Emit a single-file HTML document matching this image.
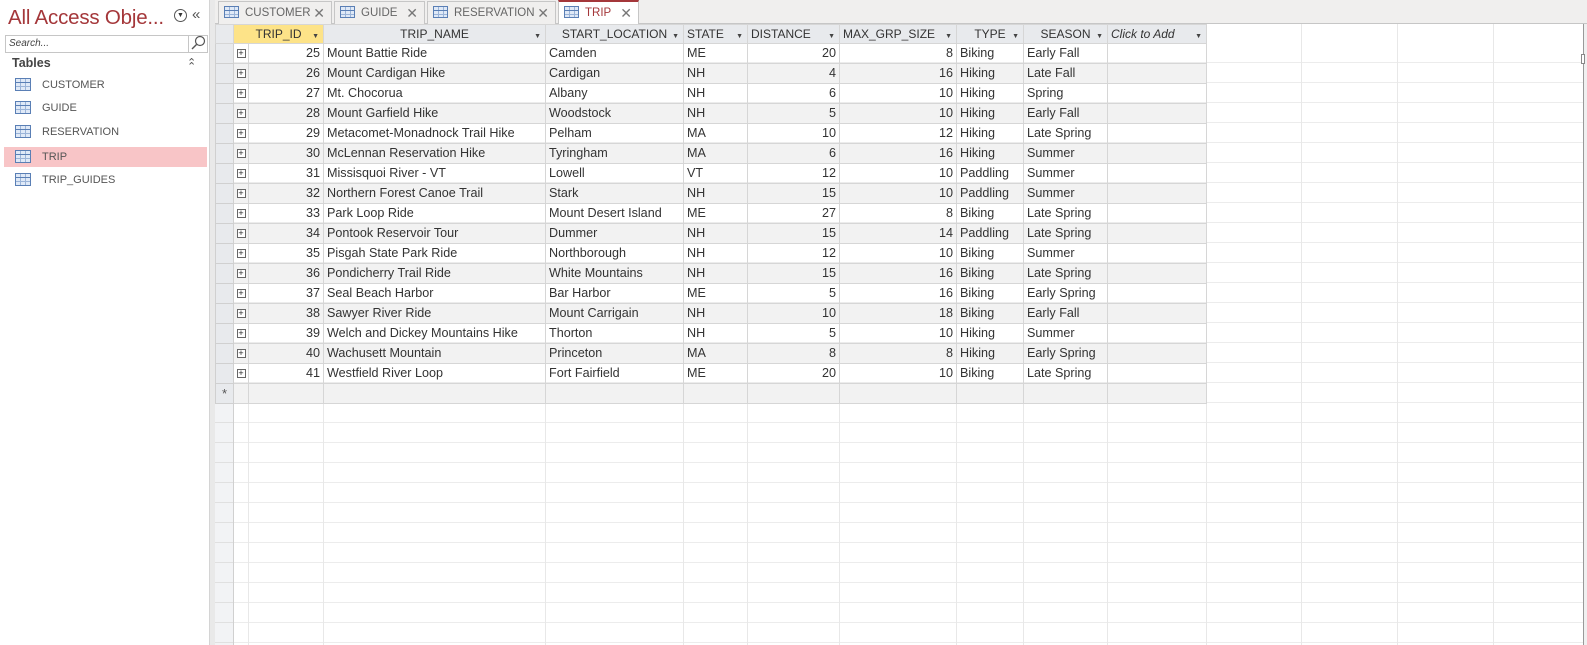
<!DOCTYPE html>
<html><head><meta charset="utf-8"><style>
*{margin:0;padding:0;box-sizing:border-box}
body{width:1587px;height:645px;overflow:hidden;background:#fff;font-family:"Liberation Sans",Arial,sans-serif;position:relative;color:#333}
#side{position:absolute;left:0;top:0;width:210px;height:645px;background:#fff;border-right:1px solid #d4d4d4}
#sbar{position:absolute;left:210px;top:0;width:5px;height:645px;background:#e9e9e9}
.title{position:absolute;left:8px;top:6px;font-size:20.5px;color:#a4373a;white-space:nowrap;letter-spacing:-0.2px}
.search{position:absolute;left:5px;top:35px;width:203px;height:18px;border:1px solid #c6c6c6;font-size:10px;font-style:italic;color:#444;padding:2px 3px}
.search .mag{position:absolute;right:0;top:-1px;width:19px;height:18px;border-left:1px solid #c6c6c6}
.tables{position:absolute;left:12px;top:56px;font-size:12.5px;font-weight:bold;color:#444}
.item{position:absolute;left:4px;width:203px;height:20px;font-size:11px;color:#555;padding:4px 0 0 38px}
.item.sel{background:#f8c5c7}
.ico{position:absolute;left:11px;top:3px;width:16px;height:13px;border:1px solid #5a7fb5;background:
linear-gradient(#5a7fb5,#5a7fb5) 0 3px/100% 1px no-repeat,
linear-gradient(#9bb4d8,#9bb4d8) 0 7px/100% 1px no-repeat,
linear-gradient(90deg,#9bb4d8,#9bb4d8) 4px 0/1px 100% no-repeat,
linear-gradient(90deg,#9bb4d8,#9bb4d8) 9px 0/1px 100% no-repeat,#dfe9f7}
#tabs{position:absolute;left:215px;top:0;width:1372px;height:24px;background:#f0efee;border-bottom:1px solid #c6c6c6}
.tab{position:absolute;top:1px;height:23px;border:1px solid #c6c6c6;border-bottom:none;background:#f0efee;font-size:11.5px;color:#666;padding:5px 0 0 26px}
.tab .ico{left:5px;top:4px;width:15px;height:12px}
.tab .x{position:absolute;right:6px;top:3px;font-size:14px;color:#777}
.tab.act{background:#fff;border-top:2px solid #a4373a;height:24px;top:0;color:#a4373a}
#bg{position:absolute;left:215px;top:43px;width:1368px;height:602px;background:
repeating-linear-gradient(to bottom,transparent 0,transparent 19px,#ececec 19px,#ececec 20px)}
#bg::before{content:"";position:absolute;left:0;top:0;width:18px;height:100%;background:repeating-linear-gradient(to bottom,#f2f3f5 0,#f2f3f5 19px,#e0e0e0 19px,#e0e0e0 20px);border-right:1px solid #d0d0d0}
.vl{position:absolute;top:24px;width:1px;height:621px;background:#e8e8e8}
#scr{position:absolute;left:1583px;top:24px;width:4px;height:621px;border-left:1px solid #999;background:#f0f0f0}
table{position:absolute;left:215px;top:24px;border-collapse:collapse;table-layout:fixed;font-size:12.6px}
td,th{border:1px solid #d6d6d6;white-space:nowrap;overflow:hidden;padding:0 3px;line-height:17px}
tr{height:20px}
tr.h{height:19px}
th{background:#e8eaed;font-weight:normal;color:#333;font-size:12px;text-align:center;position:relative}
th .dd{position:absolute;right:4px;top:3px;font-size:7px;color:#444}
th.y{background:#fde388}
tr.a td{background:#f2f2f2}
td.r{text-align:right}
td.s{background:#e8eaed!important;border-color:#d0d0d0}
td.e{padding:0;text-align:center}
.pl{display:inline-block;width:9px;height:9px;border:1px solid #666;font-size:9px;line-height:7px;text-align:center;color:#222;vertical-align:middle;background:#fff}
</style></head><body>
<div id="side">
<div class="title">All Access Obje...</div>
<div style="position:absolute;left:174px;top:9px;width:13px;height:13px;border:1px solid #555;border-radius:50%;font-size:7px;text-align:center;line-height:11px;color:#333">▼</div>
<div style="position:absolute;left:192px;top:6px;font-size:15px;color:#555">«</div>
<div class="search">Search...<div class="mag"><svg width="18" height="16"><circle cx="11" cy="6" r="4.5" fill="none" stroke="#555" stroke-width="1.2"/><line x1="7.5" y1="9.5" x2="3" y2="14" stroke="#555" stroke-width="1.4"/></svg></div></div>
<div class="tables">Tables</div>
<div style="position:absolute;left:187px;top:56px;font-size:11px;color:#555">⌃</div>
<div style="position:absolute;left:187px;top:60px;font-size:11px;color:#555">⌃</div>
<div class="item" style="top:75px"><span class="ico"></span>CUSTOMER</div>
<div class="item" style="top:98px"><span class="ico"></span>GUIDE</div>
<div class="item" style="top:122px"><span class="ico"></span>RESERVATION</div>
<div class="item sel" style="top:147px"><span class="ico"></span>TRIP</div>
<div class="item" style="top:170px"><span class="ico"></span>TRIP_GUIDES</div>
</div>
<div id="sbar"></div>
<div id="tabs">
<div class="tab" style="left:3px;width:114px"><span class="ico"></span>CUSTOMER<span class="x">✕</span></div>
<div class="tab" style="left:119px;width:91px"><span class="ico"></span>GUIDE<span class="x">✕</span></div>
<div class="tab" style="left:212px;width:129px"><span class="ico"></span>RESERVATION<span class="x">✕</span></div>
<div class="tab act" style="left:343px;width:81px"><span class="ico"></span>TRIP<span class="x">✕</span></div>
</div>
<div id="bg"></div>
<div class="vl" style="left:248px"></div><div class="vl" style="left:323px"></div><div class="vl" style="left:545px"></div><div class="vl" style="left:683px"></div><div class="vl" style="left:747px"></div><div class="vl" style="left:839px"></div><div class="vl" style="left:956px"></div><div class="vl" style="left:1023px"></div><div class="vl" style="left:1107px"></div><div class="vl" style="left:1206px"></div><div class="vl" style="left:1301px"></div><div class="vl" style="left:1397px"></div><div class="vl" style="left:1493px"></div>
<div id="scr"><div style="position:absolute;left:-3px;top:30px;width:4px;height:10px;border:1px solid #888;background:#fff"></div></div>
<table>
<colgroup><col style="width:18px"><col style="width:15px"><col style="width:75px"><col style="width:222px"><col style="width:138px"><col style="width:64px"><col style="width:92px"><col style="width:117px"><col style="width:67px"><col style="width:84px"><col style="width:99px"></colgroup>
<tr class="h"><th style="background:#e8eaed"></th><th class="y" colspan="2">TRIP_ID<span class="dd">▼</span></th><th>TRIP_NAME<span class="dd">▼</span></th><th>START_LOCATION<span class="dd">▼</span></th><th style="text-align:left">STATE<span class="dd">▼</span></th><th style="text-align:left">DISTANCE<span class="dd">▼</span></th><th style="text-align:left">MAX_GRP_SIZE<span class="dd">▼</span></th><th>TYPE<span class="dd">▼</span></th><th>SEASON<span class="dd">▼</span></th><th style="text-align:left;font-style:italic">Click to Add<span class="dd">▼</span></th></tr>
<tr><td class="s"></td><td class="e"><span class="pl">+</span></td><td class="r">25</td><td>Mount Battie Ride</td><td>Camden</td><td>ME</td><td class="r">20</td><td class="r">8</td><td>Biking</td><td>Early Fall</td><td></td></tr>
<tr class="a"><td class="s"></td><td class="e"><span class="pl">+</span></td><td class="r">26</td><td>Mount Cardigan Hike</td><td>Cardigan</td><td>NH</td><td class="r">4</td><td class="r">16</td><td>Hiking</td><td>Late Fall</td><td></td></tr>
<tr><td class="s"></td><td class="e"><span class="pl">+</span></td><td class="r">27</td><td>Mt. Chocorua</td><td>Albany</td><td>NH</td><td class="r">6</td><td class="r">10</td><td>Hiking</td><td>Spring</td><td></td></tr>
<tr class="a"><td class="s"></td><td class="e"><span class="pl">+</span></td><td class="r">28</td><td>Mount Garfield Hike</td><td>Woodstock</td><td>NH</td><td class="r">5</td><td class="r">10</td><td>Hiking</td><td>Early Fall</td><td></td></tr>
<tr><td class="s"></td><td class="e"><span class="pl">+</span></td><td class="r">29</td><td>Metacomet-Monadnock Trail Hike</td><td>Pelham</td><td>MA</td><td class="r">10</td><td class="r">12</td><td>Hiking</td><td>Late Spring</td><td></td></tr>
<tr class="a"><td class="s"></td><td class="e"><span class="pl">+</span></td><td class="r">30</td><td>McLennan Reservation Hike</td><td>Tyringham</td><td>MA</td><td class="r">6</td><td class="r">16</td><td>Hiking</td><td>Summer</td><td></td></tr>
<tr><td class="s"></td><td class="e"><span class="pl">+</span></td><td class="r">31</td><td>Missisquoi River - VT</td><td>Lowell</td><td>VT</td><td class="r">12</td><td class="r">10</td><td>Paddling</td><td>Summer</td><td></td></tr>
<tr class="a"><td class="s"></td><td class="e"><span class="pl">+</span></td><td class="r">32</td><td>Northern Forest Canoe Trail</td><td>Stark</td><td>NH</td><td class="r">15</td><td class="r">10</td><td>Paddling</td><td>Summer</td><td></td></tr>
<tr><td class="s"></td><td class="e"><span class="pl">+</span></td><td class="r">33</td><td>Park Loop Ride</td><td>Mount Desert Island</td><td>ME</td><td class="r">27</td><td class="r">8</td><td>Biking</td><td>Late Spring</td><td></td></tr>
<tr class="a"><td class="s"></td><td class="e"><span class="pl">+</span></td><td class="r">34</td><td>Pontook Reservoir Tour</td><td>Dummer</td><td>NH</td><td class="r">15</td><td class="r">14</td><td>Paddling</td><td>Late Spring</td><td></td></tr>
<tr><td class="s"></td><td class="e"><span class="pl">+</span></td><td class="r">35</td><td>Pisgah State Park Ride</td><td>Northborough</td><td>NH</td><td class="r">12</td><td class="r">10</td><td>Biking</td><td>Summer</td><td></td></tr>
<tr class="a"><td class="s"></td><td class="e"><span class="pl">+</span></td><td class="r">36</td><td>Pondicherry Trail Ride</td><td>White Mountains</td><td>NH</td><td class="r">15</td><td class="r">16</td><td>Biking</td><td>Late Spring</td><td></td></tr>
<tr><td class="s"></td><td class="e"><span class="pl">+</span></td><td class="r">37</td><td>Seal Beach Harbor</td><td>Bar Harbor</td><td>ME</td><td class="r">5</td><td class="r">16</td><td>Biking</td><td>Early Spring</td><td></td></tr>
<tr class="a"><td class="s"></td><td class="e"><span class="pl">+</span></td><td class="r">38</td><td>Sawyer River Ride</td><td>Mount Carrigain</td><td>NH</td><td class="r">10</td><td class="r">18</td><td>Biking</td><td>Early Fall</td><td></td></tr>
<tr><td class="s"></td><td class="e"><span class="pl">+</span></td><td class="r">39</td><td>Welch and Dickey Mountains Hike</td><td>Thorton</td><td>NH</td><td class="r">5</td><td class="r">10</td><td>Hiking</td><td>Summer</td><td></td></tr>
<tr class="a"><td class="s"></td><td class="e"><span class="pl">+</span></td><td class="r">40</td><td>Wachusett Mountain</td><td>Princeton</td><td>MA</td><td class="r">8</td><td class="r">8</td><td>Hiking</td><td>Early Spring</td><td></td></tr>
<tr><td class="s"></td><td class="e"><span class="pl">+</span></td><td class="r">41</td><td>Westfield River Loop</td><td>Fort Fairfield</td><td>ME</td><td class="r">20</td><td class="r">10</td><td>Biking</td><td>Late Spring</td><td></td></tr>
<tr class="a"><td class="s" style="text-align:center;color:#555;font-size:13px">*</td><td></td><td></td><td></td><td></td><td></td><td></td><td></td><td></td><td></td><td></td></tr>
</table>
</body></html>
